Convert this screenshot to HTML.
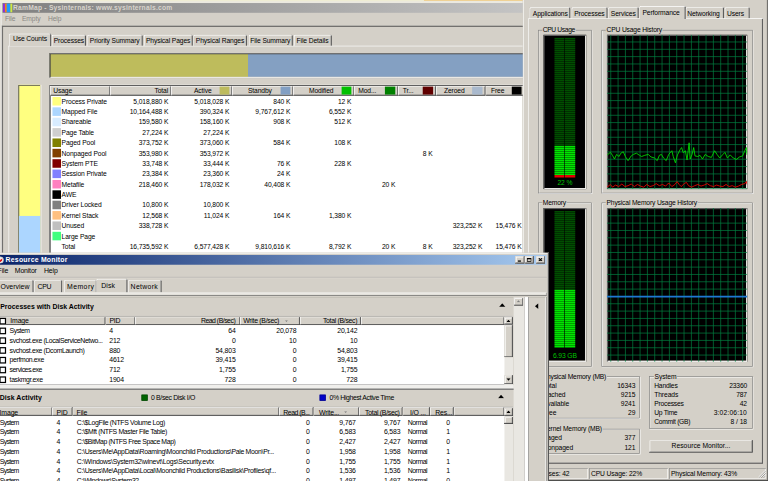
<!DOCTYPE html>
<html><head><meta charset="utf-8"><title>RamMap / Resource Monitor / Task Manager</title>
<style>
html,body{margin:0;padding:0;background:#d4d0c8;overflow:hidden}
body{width:768px;height:481px;position:relative}
#s{position:absolute;left:0;top:0;width:1259.02px;height:788.52px;transform:scale(0.61);transform-origin:0 0;overflow:hidden;
font-family:"Liberation Sans",sans-serif;font-size:11px;line-height:13.11px;letter-spacing:-0.18px;color:#000}
#s div,#s span,#s svg{position:absolute;display:block}
#s span{white-space:pre}
</style></head><body><div id="s">
<div style="left:0.00px;top:0.00px;width:857.38px;height:4.59px;background:#ebe9e0"></div>
<div style="left:0.00px;top:0.00px;width:695.08px;height:1.64px;background:#efedd4"></div>
<div style="left:695.08px;top:0.00px;width:161.64px;height:1.48px;background:#f2c263"></div>
<div style="left:0.00px;top:4.59px;width:857.38px;height:786.89px;background:#d4d0c8"></div>
<div style="left:0.00px;top:4.59px;width:2.46px;height:786.89px;background:#e3e0d9"></div>
<div style="left:1.97px;top:4.59px;width:0.82px;height:786.89px;background:#f2f1ee"></div>
<div style="left:3.61px;top:4.75px;width:852.95px;height:16.07px;background:linear-gradient(90deg,#808080,#c4c4c4)"></div>
<div style="left:4.59px;top:5.74px;width:3.93px;height:14.26px;background:#8a2be2"></div>
<div style="left:8.20px;top:5.74px;width:3.61px;height:14.26px;background:#f08020"></div>
<div style="left:11.48px;top:5.74px;width:5.25px;height:14.26px;background:#1e9cff"></div>
<div style="left:16.72px;top:5.74px;width:3.11px;height:14.26px;background:#cfe83c"></div>
<span style="left:21.31px;top:6.89px;color:#d8d4cc;font-weight:bold;letter-spacing:0.36px;">RamMap - Sysinternals: www.sysinternals.com</span>
<span style="left:8.20px;top:24.92px;color:#8a8884;">File</span>
<span style="left:36.07px;top:24.92px;color:#8a8884;">Empty</span>
<span style="left:78.69px;top:24.92px;color:#8a8884;">Help</span>
<div style="left:2.62px;top:42.13px;width:854.10px;height:1.00px;background:#808080"></div>
<div style="left:3.61px;top:43.11px;width:854.10px;height:1.00px;background:#404040"></div>
<div style="left:2.62px;top:42.13px;width:1.00px;height:754.10px;background:#808080"></div>
<div style="left:3.61px;top:43.11px;width:1.00px;height:754.10px;background:#404040"></div>
<div style="left:13.93px;top:74.75px;width:842.62px;height:1.00px;background:#ffffff"></div>
<div style="left:13.93px;top:74.75px;width:1.00px;height:721.31px;background:#ffffff"></div>
<div style="left:85.25px;top:57.38px;width:56.23px;height:17.38px;background:#d4d0c8;border-radius:2px 2px 0 0;box-shadow:inset 1px 1px 0 #ffffff,inset -1px 0 0 #404040,inset -2px 0 0 #808080"></div>
<span style="left:85.25px;width:55.25px;text-align:center;top:60.00px;">Processes</span>
<div style="left:142.62px;top:57.38px;width:91.80px;height:17.38px;background:#d4d0c8;border-radius:2px 2px 0 0;box-shadow:inset 1px 1px 0 #ffffff,inset -1px 0 0 #404040,inset -2px 0 0 #808080"></div>
<span style="left:142.62px;width:90.82px;text-align:center;top:60.00px;">Priority Summary</span>
<div style="left:235.74px;top:57.38px;width:80.66px;height:17.38px;background:#d4d0c8;border-radius:2px 2px 0 0;box-shadow:inset 1px 1px 0 #ffffff,inset -1px 0 0 #404040,inset -2px 0 0 #808080"></div>
<span style="left:235.74px;width:79.67px;text-align:center;top:60.00px;">Physical Pages</span>
<div style="left:317.38px;top:57.38px;width:87.54px;height:17.38px;background:#d4d0c8;border-radius:2px 2px 0 0;box-shadow:inset 1px 1px 0 #ffffff,inset -1px 0 0 #404040,inset -2px 0 0 #808080"></div>
<span style="left:317.38px;width:86.56px;text-align:center;top:60.00px;">Physical Ranges</span>
<div style="left:407.54px;top:57.38px;width:72.13px;height:17.38px;background:#d4d0c8;border-radius:2px 2px 0 0;box-shadow:inset 1px 1px 0 #ffffff,inset -1px 0 0 #404040,inset -2px 0 0 #808080"></div>
<span style="left:407.54px;width:71.15px;text-align:center;top:60.00px;">File Summary</span>
<div style="left:481.97px;top:57.38px;width:61.64px;height:17.38px;background:#d4d0c8;border-radius:2px 2px 0 0;box-shadow:inset 1px 1px 0 #ffffff,inset -1px 0 0 #404040,inset -2px 0 0 #808080"></div>
<span style="left:481.97px;width:60.66px;text-align:center;top:60.00px;">File Details</span>
<div style="left:15.08px;top:54.59px;width:69.18px;height:21.15px;background:#d4d0c8;border-radius:2px 2px 0 0;box-shadow:inset 1px 1px 0 #ffffff,inset -1px 0 0 #404040,inset -2px 0 0 #808080"></div>
<span style="left:15.08px;width:68.20px;text-align:center;top:58.03px;">Use Counts</span>
<div style="left:80.66px;top:86.56px;width:780.33px;height:41.31px;background:linear-gradient(90deg,#bebc5c 325.90px,#84a0c2 325.90px);box-shadow:inset 1px 1px 0 #808080,inset -1px -1px 0 #ffffff,inset 2px 2px 0 #404040,inset -2px -2px 0 #d4d0c8"></div>
<div style="left:29.84px;top:138.69px;width:36.39px;height:278.69px;background:#ffff80;box-shadow:inset 1.5px 1.5px 0 #505050"></div>
<div style="left:66.72px;top:139.34px;width:1.31px;height:278.69px;background:#f4f3f0"></div>
<div style="left:31.31px;top:354.10px;width:34.92px;height:65.57px;background:#acd6ff"></div>
<div style="left:80.66px;top:138.85px;width:777.05px;height:278.69px;background:#fff;box-shadow:inset 1px 1px 0 #808080,inset -1px -1px 0 #ffffff,inset 2px 2px 0 #404040,inset -2px -2px 0 #d4d0c8"></div>
<div style="left:82.46px;top:140.66px;width:98.52px;height:16.23px;background:#d4d0c8;box-shadow:inset -1px -1px 0 #404040,inset 1px 1px 0 #ffffff,inset -2px -2px 0 #808080"></div>
<span style="left:87.21px;top:142.54px;">Usage</span>
<div style="left:180.98px;top:140.66px;width:100.49px;height:16.23px;background:#d4d0c8;box-shadow:inset -1px -1px 0 #404040,inset 1px 1px 0 #ffffff,inset -2px -2px 0 #808080"></div>
<span style="right:983.44px;top:142.54px;">Total</span>
<div style="left:281.48px;top:140.66px;width:99.84px;height:16.23px;background:#d4d0c8;box-shadow:inset -1px -1px 0 #404040,inset 1px 1px 0 #ffffff,inset -2px -2px 0 #808080"></div>
<div style="left:359.67px;top:142.30px;width:16.72px;height:12.95px;background:#bdbb5d"></div>
<span style="left:318.03px;top:142.54px;">Active</span>
<div style="left:381.31px;top:140.66px;width:99.84px;height:16.23px;background:#d4d0c8;box-shadow:inset -1px -1px 0 #404040,inset 1px 1px 0 #ffffff,inset -2px -2px 0 #808080"></div>
<div style="left:459.51px;top:142.30px;width:16.72px;height:12.95px;background:#829fc3"></div>
<span style="left:406.56px;top:142.54px;">Standby</span>
<div style="left:481.15px;top:140.66px;width:100.00px;height:16.23px;background:#d4d0c8;box-shadow:inset -1px -1px 0 #404040,inset 1px 1px 0 #ffffff,inset -2px -2px 0 #808080"></div>
<div style="left:559.51px;top:142.30px;width:16.72px;height:12.95px;background:#00c000"></div>
<span style="left:506.56px;top:142.54px;">Modified</span>
<div style="left:581.15px;top:140.66px;width:71.80px;height:16.23px;background:#d4d0c8;box-shadow:inset -1px -1px 0 #404040,inset 1px 1px 0 #ffffff,inset -2px -2px 0 #808080"></div>
<div style="left:631.31px;top:142.30px;width:16.72px;height:12.95px;background:#008000"></div>
<span style="left:587.21px;top:142.54px;">Mod...</span>
<div style="left:652.95px;top:140.66px;width:62.13px;height:16.23px;background:#d4d0c8;box-shadow:inset -1px -1px 0 #404040,inset 1px 1px 0 #ffffff,inset -2px -2px 0 #808080"></div>
<div style="left:693.44px;top:142.30px;width:16.72px;height:12.95px;background:#600000"></div>
<span style="left:660.33px;top:142.54px;">Tr...</span>
<div style="left:715.08px;top:140.66px;width:80.49px;height:16.23px;background:#d4d0c8;box-shadow:inset -1px -1px 0 #404040,inset 1px 1px 0 #ffffff,inset -2px -2px 0 #808080"></div>
<div style="left:773.93px;top:142.30px;width:16.72px;height:12.95px;background:#a9b9cd"></div>
<span style="left:727.87px;top:142.54px;">Zeroed</span>
<div style="left:795.57px;top:140.66px;width:64.75px;height:16.23px;background:#d4d0c8;box-shadow:inset -1px -1px 0 #404040,inset 1px 1px 0 #ffffff,inset -2px -2px 0 #808080"></div>
<div style="left:838.69px;top:142.30px;width:16.72px;height:12.95px;background:#000"></div>
<span style="left:804.92px;top:142.54px;">Free</span>
<div style="left:85.74px;top:159.18px;width:13.77px;height:13.77px;background:#ffff80"></div>
<span style="left:100.98px;top:160.16px;">Process Private</span>
<span style="right:983.11px;top:160.16px;">5,018,880 K</span>
<span style="right:883.11px;top:160.16px;">5,018,028 K</span>
<span style="right:783.11px;top:160.16px;">840 K</span>
<span style="right:683.11px;top:160.16px;">12 K</span>
<div style="left:85.74px;top:176.16px;width:13.77px;height:13.77px;background:#acd6ff"></div>
<span style="left:100.98px;top:177.15px;">Mapped File</span>
<span style="right:983.11px;top:177.15px;">10,164,488 K</span>
<span style="right:883.11px;top:177.15px;">390,324 K</span>
<span style="right:783.11px;top:177.15px;">9,767,612 K</span>
<span style="right:683.11px;top:177.15px;">6,552 K</span>
<div style="left:85.74px;top:193.15px;width:13.77px;height:13.77px;background:#d8ecff"></div>
<span style="left:100.98px;top:194.13px;">Shareable</span>
<span style="right:983.11px;top:194.13px;">159,580 K</span>
<span style="right:883.11px;top:194.13px;">158,160 K</span>
<span style="right:783.11px;top:194.13px;">908 K</span>
<span style="right:683.11px;top:194.13px;">512 K</span>
<div style="left:85.74px;top:210.13px;width:13.77px;height:13.77px;background:#cfcfcf"></div>
<span style="left:100.98px;top:211.11px;">Page Table</span>
<span style="right:983.11px;top:211.11px;">27,224 K</span>
<span style="right:883.11px;top:211.11px;">27,224 K</span>
<div style="left:85.74px;top:227.11px;width:13.77px;height:13.77px;background:#808000"></div>
<span style="left:100.98px;top:228.10px;">Paged Pool</span>
<span style="right:983.11px;top:228.10px;">373,752 K</span>
<span style="right:883.11px;top:228.10px;">373,060 K</span>
<span style="right:783.11px;top:228.10px;">584 K</span>
<span style="right:683.11px;top:228.10px;">108 K</span>
<div style="left:85.74px;top:244.10px;width:13.77px;height:13.77px;background:#804000"></div>
<span style="left:100.98px;top:245.08px;">Nonpaged Pool</span>
<span style="right:983.11px;top:245.08px;">353,980 K</span>
<span style="right:883.11px;top:245.08px;">353,972 K</span>
<span style="right:549.84px;top:245.08px;">8 K</span>
<div style="left:85.74px;top:261.08px;width:13.77px;height:13.77px;background:#800000"></div>
<span style="left:100.98px;top:262.07px;">System PTE</span>
<span style="right:983.11px;top:262.07px;">33,748 K</span>
<span style="right:883.11px;top:262.07px;">33,444 K</span>
<span style="right:783.11px;top:262.07px;">76 K</span>
<span style="right:683.11px;top:262.07px;">228 K</span>
<div style="left:85.74px;top:278.07px;width:13.77px;height:13.77px;background:#8080ff"></div>
<span style="left:100.98px;top:279.05px;">Session Private</span>
<span style="right:983.11px;top:279.05px;">23,384 K</span>
<span style="right:883.11px;top:279.05px;">23,360 K</span>
<span style="right:783.11px;top:279.05px;">24 K</span>
<div style="left:85.74px;top:295.05px;width:13.77px;height:13.77px;background:#ff80c0"></div>
<span style="left:100.98px;top:296.03px;">Metafile</span>
<span style="right:983.11px;top:296.03px;">218,460 K</span>
<span style="right:883.11px;top:296.03px;">178,032 K</span>
<span style="right:783.11px;top:296.03px;">40,408 K</span>
<span style="right:610.98px;top:296.03px;">20 K</span>
<div style="left:85.74px;top:312.03px;width:13.77px;height:13.77px;background:#000000"></div>
<span style="left:100.98px;top:313.02px;">AWE</span>
<div style="left:85.74px;top:329.02px;width:13.77px;height:13.77px;background:#808080"></div>
<span style="left:100.98px;top:330.00px;">Driver Locked</span>
<span style="right:983.11px;top:330.00px;">10,800 K</span>
<span style="right:883.11px;top:330.00px;">10,800 K</span>
<div style="left:85.74px;top:346.00px;width:13.77px;height:13.77px;background:#ffc080"></div>
<span style="left:100.98px;top:346.98px;">Kernel Stack</span>
<span style="right:983.11px;top:346.98px;">12,568 K</span>
<span style="right:883.11px;top:346.98px;">11,024 K</span>
<span style="right:783.11px;top:346.98px;">164 K</span>
<span style="right:683.11px;top:346.98px;">1,380 K</span>
<div style="left:85.74px;top:362.98px;width:13.77px;height:13.77px;background:#c0c0c0"></div>
<span style="left:100.98px;top:363.97px;">Unused</span>
<span style="right:983.11px;top:363.97px;">338,728 K</span>
<span style="right:468.36px;top:363.97px;">323,252 K</span>
<span style="right:404.10px;top:363.97px;">15,476 K</span>
<div style="left:85.74px;top:379.97px;width:13.77px;height:13.77px;background:#40ff80"></div>
<span style="left:100.98px;top:380.95px;">Large Page</span>
<span style="left:100.98px;top:397.93px;">Total</span>
<span style="right:983.11px;top:397.93px;">16,735,592 K</span>
<span style="right:883.11px;top:397.93px;">6,577,428 K</span>
<span style="right:783.11px;top:397.93px;">9,810,616 K</span>
<span style="right:683.11px;top:397.93px;">8,792 K</span>
<span style="right:610.98px;top:397.93px;">20 K</span>
<span style="right:549.84px;top:397.93px;">8 K</span>
<span style="right:468.36px;top:397.93px;">323,252 K</span>
<span style="right:404.10px;top:397.93px;">15,476 K</span>
<div style="left:856.72px;top:0.00px;width:403.28px;height:790.16px;background:#d4d0c8"></div>
<div style="left:858.03px;top:0.00px;width:1.00px;height:790.16px;background:#ffffff"></div>
<div style="left:866.07px;top:29.84px;width:385.25px;height:730.16px;background:#d4d0c8;box-shadow:inset 1px 1px 0 #ffffff,inset -1px -1px 0 #404040,inset -2px -2px 0 #808080"></div>
<div style="left:868.20px;top:12.46px;width:66.89px;height:17.70px;background:#d4d0c8;border-radius:2px 2px 0 0;box-shadow:inset 1px 1px 0 #ffffff,inset -1px 0 0 #404040,inset -2px 0 0 #808080"></div>
<span style="left:873.44px;top:16.39px;">Applications</span>
<div style="left:936.56px;top:12.46px;width:59.34px;height:17.70px;background:#d4d0c8;border-radius:2px 2px 0 0;box-shadow:inset 1px 1px 0 #ffffff,inset -1px 0 0 #404040,inset -2px 0 0 #808080"></div>
<span style="left:941.31px;top:16.39px;">Processes</span>
<div style="left:996.56px;top:12.46px;width:50.82px;height:17.70px;background:#d4d0c8;border-radius:2px 2px 0 0;box-shadow:inset 1px 1px 0 #ffffff,inset -1px 0 0 #404040,inset -2px 0 0 #808080"></div>
<span style="left:1001.31px;top:16.39px;">Services</span>
<div style="left:1124.43px;top:12.46px;width:62.95px;height:17.70px;background:#d4d0c8;border-radius:2px 2px 0 0;box-shadow:inset 1px 1px 0 #ffffff,inset -1px 0 0 #404040,inset -2px 0 0 #808080"></div>
<span style="left:1126.56px;top:16.39px;">Networking</span>
<div style="left:1188.36px;top:12.46px;width:40.33px;height:17.70px;background:#d4d0c8;border-radius:2px 2px 0 0;box-shadow:inset 1px 1px 0 #ffffff,inset -1px 0 0 #404040,inset -2px 0 0 #808080"></div>
<span style="left:1191.80px;top:16.39px;">Users</span>
<div style="left:1048.20px;top:10.33px;width:76.07px;height:20.66px;background:#d4d0c8;border-radius:2px 2px 0 0;box-shadow:inset 1px 1px 0 #ffffff,inset -1px 0 0 #404040,inset -2px 0 0 #808080"></div>
<span style="left:1053.28px;top:14.10px;">Performance</span>
<div style="left:881.64px;top:48.52px;width:88.52px;height:268.85px;border:1px solid #808080;box-shadow:1px 1px 0 #ffffff,inset 1px 1px 0 #ffffff;box-sizing:border-box"></div>
<div style="left:985.90px;top:48.52px;width:247.87px;height:268.85px;border:1px solid #808080;box-shadow:1px 1px 0 #ffffff,inset 1px 1px 0 #ffffff;box-sizing:border-box"></div>
<div style="left:881.64px;top:332.46px;width:88.52px;height:268.85px;border:1px solid #808080;box-shadow:1px 1px 0 #ffffff,inset 1px 1px 0 #ffffff;box-sizing:border-box"></div>
<div style="left:985.90px;top:332.46px;width:247.87px;height:268.85px;border:1px solid #808080;box-shadow:1px 1px 0 #ffffff,inset 1px 1px 0 #ffffff;box-sizing:border-box"></div>
<span style="left:888.69px;top:41.64px;letter-spacing:-0.570px;background:#d4d0c8;padding:0 1px">CPU Usage</span>
<span style="left:993.28px;top:41.64px;letter-spacing:-0.257px;background:#d4d0c8;padding:0 1px">CPU Usage History</span>
<span style="left:888.69px;top:325.57px;letter-spacing:-0.254px;background:#d4d0c8;padding:0 1px">Memory</span>
<span style="left:993.28px;top:325.57px;letter-spacing:-0.259px;background:#d4d0c8;padding:0 1px">Physical Memory Usage History</span>
<div style="left:891.15px;top:57.21px;width:69.84px;height:252.46px;background:#000;box-shadow:inset 1px 1px 0 #808080,inset -1px -1px 0 #ffffff,inset 2px 2px 0 #404040,inset -2px -2px 0 #d4d0c8"></div>
<div style="left:909.02px;top:62.13px;width:33.61px;height:177.21px;background:repeating-linear-gradient(180deg,#004e00 0,#004e00 1.7px,#002600 2.6px,#004e00 3.279px)"></div>
<div style="left:909.02px;top:239.34px;width:33.61px;height:47.38px;background:repeating-linear-gradient(180deg,#00e400 0,#00e400 1.7px,#007400 2.6px,#00e400 3.279px)"></div>
<div style="left:909.02px;top:286.72px;width:33.61px;height:4.59px;background:#e80000"></div>
<div style="left:925.16px;top:62.13px;width:1.31px;height:229.51px;background:#000"></div>
<span style="left:891.15px;width:69.84px;text-align:center;top:293.77px;color:#00c400;">22 %</span>
<div style="left:891.15px;top:340.82px;width:69.84px;height:252.46px;background:#000;box-shadow:inset 1px 1px 0 #808080,inset -1px -1px 0 #ffffff,inset 2px 2px 0 #404040,inset -2px -2px 0 #d4d0c8"></div>
<div style="left:909.02px;top:345.74px;width:33.61px;height:129.67px;background:repeating-linear-gradient(180deg,#004e00 0,#004e00 1.7px,#002600 2.6px,#004e00 3.279px)"></div>
<div style="left:909.02px;top:475.41px;width:33.61px;height:94.92px;background:repeating-linear-gradient(180deg,#00e400 0,#00e400 1.7px,#007400 2.6px,#00e400 3.279px)"></div>
<div style="left:925.16px;top:345.74px;width:1.31px;height:229.51px;background:#000"></div>
<span style="left:891.15px;width:69.84px;text-align:center;top:577.38px;color:#00c400;">6.93 GB</span>
<div style="left:995.08px;top:57.21px;width:230.16px;height:252.46px;background:#000;box-shadow:inset 1px 1px 0 #808080,inset -1px -1px 0 #ffffff,inset 2px 2px 0 #404040,inset -2px -2px 0 #d4d0c8"></div>
<svg style="left:995.08px;top:57.21px;width:230.16px;height:252.46px" viewBox="0 0 230.16 252.46"><g stroke="#008040" stroke-width="1.15" fill="none"><path d="M6.23 0V252.46"/><path d="M18.25 0V252.46"/><path d="M30.26 0V252.46"/><path d="M42.28 0V252.46"/><path d="M54.30 0V252.46"/><path d="M66.31 0V252.46"/><path d="M78.33 0V252.46"/><path d="M90.34 0V252.46"/><path d="M102.36 0V252.46"/><path d="M114.38 0V252.46"/><path d="M126.39 0V252.46"/><path d="M138.41 0V252.46"/><path d="M150.43 0V252.46"/><path d="M162.44 0V252.46"/><path d="M174.46 0V252.46"/><path d="M186.48 0V252.46"/><path d="M198.49 0V252.46"/><path d="M210.51 0V252.46"/><path d="M222.52 0V252.46"/><path d="M0 11.80H230.16"/><path d="M0 23.82H230.16"/><path d="M0 35.84H230.16"/><path d="M0 47.85H230.16"/><path d="M0 59.87H230.16"/><path d="M0 71.89H230.16"/><path d="M0 83.90H230.16"/><path d="M0 95.92H230.16"/><path d="M0 107.93H230.16"/><path d="M0 119.95H230.16"/><path d="M0 131.97H230.16"/><path d="M0 143.98H230.16"/><path d="M0 156.00H230.16"/><path d="M0 168.02H230.16"/><path d="M0 180.03H230.16"/><path d="M0 192.05H230.16"/><path d="M0 204.07H230.16"/><path d="M0 216.08H230.16"/><path d="M0 228.10H230.16"/><path d="M0 240.11H230.16"/><path d="M0 252.13H230.16"/></g><path d="M0.1 196.9 L1.5 196.2 L5.6 192.8 L9.0 197.6 L12.4 203.7 L15.8 196.2 L19.9 199.6 L22.7 194.2 L26.8 191.8 L30.2 199.6 L34.6 206.4 L39.8 198.6 L43.2 196.2 L48.3 194.2 L53.4 197.6 L56.8 199.6 L62.0 197.6 L67.8 196.2 L72.2 200.3 L78.0 202.0 L82.4 206.4 L85.9 197.6 L89.3 196.2 L92.7 202.0 L97.1 206.4 L101.2 196.2 L106.4 190.1 L108.7 199.6 L112.2 209.9 L115.6 196.9 L120.0 188.3 L122.4 184.9 L125.1 193.5 L128.6 190.1 L131.3 205.4 L134.7 177.1 L136.4 203.7 L139.5 196.2 L142.2 184.9 L144.3 198.6 L149.0 199.6 L152.5 197.6 L156.6 203.7 L161.0 196.2 L166.1 199.6 L171.2 201.0 L176.4 190.1 L180.5 196.2 L184.9 202.0 L190.0 196.2 L193.4 192.8 L197.5 202.0 L202.0 196.9 L207.1 202.0 L212.2 204.4 L217.3 200.3 L222.5 198.6 L225.9 190.1 L228.6 184.9 L229.6 196.9" stroke="#00e000" stroke-width="1.4" fill="none" stroke-linejoin="round"/><path d="M0.1 248.1 L1.5 248.8 L5.6 245.4 L9.0 249.8 L14.1 246.4 L19.3 248.8 L24.4 244.7 L29.5 248.8 L34.6 247.4 L39.8 244.7 L44.9 248.8 L50.0 245.4 L55.1 248.1 L60.2 249.8 L65.4 245.4 L70.5 248.8 L75.6 247.4 L80.7 244.0 L85.9 247.4 L91.0 245.4 L96.1 248.1 L101.2 243.0 L106.4 248.8 L111.5 245.4 L114.9 240.6 L118.3 245.4 L121.7 248.8 L126.8 244.0 L130.3 242.0 L133.7 247.4 L138.8 249.8 L143.9 247.4 L149.0 245.4 L154.2 248.1 L159.3 246.4 L164.4 244.0 L169.5 247.4 L174.7 248.8 L179.8 246.4 L184.9 248.1 L190.0 248.8 L195.2 245.4 L200.3 248.8 L205.4 247.4 L210.5 249.8 L215.6 248.1 L220.8 245.4 L225.9 244.0 L228.6 240.6 L229.6 245.4" stroke="#f00000" stroke-width="1.4" fill="none" stroke-linejoin="round"/></svg>
<div style="left:995.08px;top:340.82px;width:230.16px;height:252.46px;background:#000;box-shadow:inset 1px 1px 0 #808080,inset -1px -1px 0 #ffffff,inset 2px 2px 0 #404040,inset -2px -2px 0 #d4d0c8"></div>
<svg style="left:995.08px;top:340.82px;width:230.16px;height:252.46px" viewBox="0 0 230.16 252.46"><g stroke="#008040" stroke-width="1.15" fill="none"><path d="M6.23 0V252.46"/><path d="M18.25 0V252.46"/><path d="M30.26 0V252.46"/><path d="M42.28 0V252.46"/><path d="M54.30 0V252.46"/><path d="M66.31 0V252.46"/><path d="M78.33 0V252.46"/><path d="M90.34 0V252.46"/><path d="M102.36 0V252.46"/><path d="M114.38 0V252.46"/><path d="M126.39 0V252.46"/><path d="M138.41 0V252.46"/><path d="M150.43 0V252.46"/><path d="M162.44 0V252.46"/><path d="M174.46 0V252.46"/><path d="M186.48 0V252.46"/><path d="M198.49 0V252.46"/><path d="M210.51 0V252.46"/><path d="M222.52 0V252.46"/><path d="M0 12.79H230.16"/><path d="M0 24.80H230.16"/><path d="M0 36.82H230.16"/><path d="M0 48.84H230.16"/><path d="M0 60.85H230.16"/><path d="M0 72.87H230.16"/><path d="M0 84.89H230.16"/><path d="M0 96.90H230.16"/><path d="M0 108.92H230.16"/><path d="M0 120.93H230.16"/><path d="M0 132.95H230.16"/><path d="M0 144.97H230.16"/><path d="M0 156.98H230.16"/><path d="M0 169.00H230.16"/><path d="M0 181.02H230.16"/><path d="M0 193.03H230.16"/><path d="M0 205.05H230.16"/><path d="M0 217.07H230.16"/><path d="M0 229.08H230.16"/><path d="M0 241.10H230.16"/></g><path d="M0 145.4H230.2" stroke="#1e78d2" stroke-width="3" fill="none"/></svg>
<div style="left:881.64px;top:616.89px;width:167.87px;height:69.51px;border:1px solid #808080;box-shadow:1px 1px 0 #ffffff,inset 1px 1px 0 #ffffff;box-sizing:border-box"></div>
<span style="left:888.69px;top:611.48px;letter-spacing:-0.334px;background:#d4d0c8;padding:0 1px">Physical Memory (MB)</span>
<span style="left:890.16px;top:626.23px;">Total</span>
<span style="right:217.54px;top:626.23px;">16343</span>
<span style="left:890.16px;top:640.82px;">Cached</span>
<span style="right:217.54px;top:640.82px;">9215</span>
<span style="left:890.16px;top:655.41px;">Available</span>
<span style="right:217.54px;top:655.41px;">9241</span>
<span style="left:890.16px;top:670.00px;">Free</span>
<span style="right:217.54px;top:670.00px;">29</span>
<div style="left:881.64px;top:702.62px;width:167.87px;height:41.64px;border:1px solid #808080;box-shadow:1px 1px 0 #ffffff,inset 1px 1px 0 #ffffff;box-sizing:border-box"></div>
<span style="left:888.69px;top:697.38px;letter-spacing:-0.245px;background:#d4d0c8;padding:0 1px">Kernel Memory (MB)</span>
<span style="left:890.16px;top:712.46px;">Paged</span>
<span style="right:217.54px;top:712.46px;">377</span>
<span style="left:890.16px;top:727.21px;">Nonpaged</span>
<span style="right:217.54px;top:727.21px;">121</span>
<div style="left:1063.93px;top:616.89px;width:169.84px;height:86.23px;border:1px solid #808080;box-shadow:1px 1px 0 #ffffff,inset 1px 1px 0 #ffffff;box-sizing:border-box"></div>
<span style="left:1071.97px;top:611.48px;letter-spacing:-0.101px;background:#d4d0c8;padding:0 1px">System</span>
<span style="left:1072.46px;top:626.23px;letter-spacing:-0.285px;">Handles</span>
<span style="right:34.43px;top:626.23px;letter-spacing:-0.281px;">23360</span>
<span style="left:1072.46px;top:640.82px;letter-spacing:-0.144px;">Threads</span>
<span style="right:34.43px;top:640.82px;">787</span>
<span style="left:1072.46px;top:655.41px;letter-spacing:-0.332px;">Processes</span>
<span style="right:34.43px;top:655.41px;">42</span>
<span style="left:1072.46px;top:670.00px;letter-spacing:-0.464px;">Up Time</span>
<span style="right:34.43px;top:670.00px;letter-spacing:0.260px;">3:02:06:10</span>
<span style="left:1072.46px;top:684.59px;letter-spacing:-0.468px;">Commit (GB)</span>
<span style="right:34.43px;top:684.59px;letter-spacing:-0.079px;">8 / 18</span>
<div style="left:1063.93px;top:720.66px;width:170.49px;height:21.31px;background:#d4d0c8;box-shadow:inset -1px -1px 0 #404040,inset 1px 1px 0 #d4d0c8,inset -2px -2px 0 #808080,inset 2px 2px 0 #ffffff"></div>
<span style="left:1063.93px;width:170.49px;text-align:center;top:725.08px;letter-spacing:0.054px;">Resource Monitor...</span>
<div style="left:859.84px;top:766.89px;width:104.10px;height:17.70px;box-shadow:inset 1px 1px 0 #808080,inset -1px -1px 0 #ffffff"></div>
<div style="left:965.90px;top:766.89px;width:129.51px;height:17.70px;box-shadow:inset 1px 1px 0 #808080,inset -1px -1px 0 #ffffff"></div>
<div style="left:1097.38px;top:766.89px;width:157.38px;height:17.70px;box-shadow:inset 1px 1px 0 #808080,inset -1px -1px 0 #ffffff"></div>
<span style="left:866.23px;top:771.48px;">Processes: 42</span>
<span style="left:968.85px;top:771.48px;">CPU Usage: 22%</span>
<span style="left:1100.00px;top:771.48px;">Physical Memory: 43%</span>
<div style="left:1256.72px;top:0.00px;width:1.00px;height:788.52px;background:#9a9894"></div>
<div style="left:1257.70px;top:0.00px;width:1.48px;height:788.52px;background:#404040"></div>
<div style="left:857.38px;top:787.05px;width:401.64px;height:1.64px;background:#404040"></div>
<div style="left:857.38px;top:786.07px;width:400.00px;height:1.00px;background:#9a9894"></div>
<svg style="left:1243.28px;top:771.48px;width:12.79px;height:12.79px" viewBox="0 0 13 13"><g stroke-width="1.5"><path d="M12 1L1 12M12 5L5 12M12 9L9 12" stroke="#707070"/><path d="M12 0L0 12M12 4L4 12M12 8L8 12" stroke="#ffffff"/></g></svg>
<div style="left:-3.28px;top:413.77px;width:903.28px;height:377.05px;background:#d4d0c8;box-shadow:inset -1px 0 0 #404040,inset -2px 0 0 #808080,inset 0 1px 0 #d4d0c8,inset 0 2px 0 #ffffff"></div>
<div style="left:0.00px;top:417.54px;width:896.39px;height:16.07px;background:linear-gradient(90deg,#0a246a,#a6caf0)"></div>
<svg style="left:-5.57px;top:419.51px;width:12.13px;height:12.46px" viewBox="0 0 74 76"><circle cx="38" cy="38" r="33" fill="#f0eeee" stroke="#c4ccc4" stroke-width="7"/><path d="M26 44L60 24L57 44L42 58L22 57Z" fill="#e01818"/></svg>
<span style="left:9.18px;top:419.34px;color:#fff;font-weight:bold;font-size:11.3px;letter-spacing:0.36px;">Resource Monitor</span>
<div style="left:844.75px;top:420.16px;width:14.75px;height:11.48px;background:#d4d0c8;box-shadow:inset -1px -1px 0 #404040,inset 1px 1px 0 #d4d0c8,inset -2px -2px 0 #808080,inset 2px 2px 0 #ffffff"></div>
<div style="left:848.85px;top:426.72px;width:5.41px;height:2.30px;background:#000"></div>
<div style="left:860.00px;top:420.16px;width:15.08px;height:11.48px;background:#d4d0c8;box-shadow:inset -1px -1px 0 #404040,inset 1px 1px 0 #d4d0c8,inset -2px -2px 0 #808080,inset 2px 2px 0 #ffffff"></div>
<div style="left:863.61px;top:422.62px;width:7.54px;height:6.56px;border:1px solid #000;border-top-width:2px;box-sizing:border-box"></div>
<div style="left:878.69px;top:420.16px;width:15.25px;height:11.48px;background:#d4d0c8;box-shadow:inset -1px -1px 0 #404040,inset 1px 1px 0 #d4d0c8,inset -2px -2px 0 #808080,inset 2px 2px 0 #ffffff"></div>
<svg style="left:881.80px;top:422.62px;width:7.87px;height:5.57px" viewBox="0 0 8 7"><path d="M0.8 0.5L7.2 6.5M7.2 0.5L0.8 6.5" stroke="#000" stroke-width="2.2"/></svg>
<span style="left:-3.93px;top:437.21px;font-size:11.3px;letter-spacing:-0.25px;">File</span>
<span style="left:24.26px;top:437.21px;font-size:11.3px;letter-spacing:-0.25px;">Monitor</span>
<span style="left:72.13px;top:437.21px;font-size:11.3px;letter-spacing:-0.25px;">Help</span>
<div style="left:0.00px;top:453.93px;width:895.74px;height:1.23px;background:#8c8c8c"></div>
<div style="left:0.00px;top:455.08px;width:895.74px;height:0.82px;background:#e6e3dc"></div>
<div style="left:-6.56px;top:459.34px;width:61.31px;height:20.33px;background:#d4d0c8;border-radius:2px 2px 0 0;box-shadow:inset 1px 1px 0 #ffffff,inset -1px 0 0 #404040,inset -2px 0 0 #808080"></div>
<div style="left:56.07px;top:459.34px;width:46.23px;height:20.33px;background:#d4d0c8;border-radius:2px 2px 0 0;box-shadow:inset 1px 1px 0 #ffffff,inset -1px 0 0 #404040,inset -2px 0 0 #808080"></div>
<div style="left:104.59px;top:459.34px;width:54.43px;height:20.33px;background:#d4d0c8;border-radius:2px 2px 0 0;box-shadow:inset 1px 1px 0 #ffffff,inset -1px 0 0 #404040,inset -2px 0 0 #808080"></div>
<div style="left:209.84px;top:459.34px;width:55.08px;height:20.33px;background:#d4d0c8;border-radius:2px 2px 0 0;box-shadow:inset 1px 1px 0 #ffffff,inset -1px 0 0 #404040,inset -2px 0 0 #808080"></div>
<span style="left:0.82px;top:463.93px;font-size:11.3px;letter-spacing:0.056px;">Overview</span>
<span style="left:61.48px;top:463.93px;font-size:11.3px;letter-spacing:-0.412px;">CPU</span>
<span style="left:109.84px;top:463.93px;font-size:11.3px;letter-spacing:0.713px;">Memory</span>
<span style="left:214.10px;top:463.93px;font-size:11.3px;letter-spacing:0.520px;">Network</span>
<div style="left:158.36px;top:457.05px;width:50.82px;height:24.59px;background:#d4d0c8;border-radius:2px 2px 0 0;box-shadow:inset 1px 1px 0 #ffffff,inset -1px 0 0 #404040,inset -2px 0 0 #808080"></div>
<span style="left:166.07px;top:461.64px;font-size:11.3px;letter-spacing:0.163px;">Disk</span>
<div style="left:0.00px;top:479.02px;width:895.74px;height:3.93px;background:#ebe9e4"></div>
<div style="left:0.00px;top:483.77px;width:895.74px;height:1.48px;background:#5c5c5c"></div>
<div style="left:0.00px;top:486.56px;width:895.74px;height:0.82px;background:#bcb8b0"></div>
<div style="left:894.75px;top:479.84px;width:1.00px;height:5.57px;background:#808080"></div>
<span style="left:0.33px;top:495.57px;font-weight:bold;font-size:11.3px;letter-spacing:0.022px;">Processes with Disk Activity</span>
<svg style="left:817.70px;top:497.05px;width:10.82px;height:6.23px" viewBox="0 0 10 6"><path d="M5 0L10 6H0Z" fill="#000"/></svg>
<div style="left:841.97px;top:486.89px;width:16.72px;height:311.48px;background:#e9e7e2"></div>
<div style="left:842.30px;top:487.54px;width:16.07px;height:13.11px;background:#d4d0c8;box-shadow:inset -1px -1px 0 #404040,inset 1px 1px 0 #d4d0c8,inset -2px -2px 0 #808080,inset 2px 2px 0 #ffffff"></div>
<svg style="left:847.21px;top:492.13px;width:5.90px;height:3.61px" viewBox="0 0 10 6"><path d="M5 0L10 6H0Z" fill="#808080"/></svg>
<div style="left:859.51px;top:486.56px;width:0.82px;height:311.48px;background:#808080"></div>
<div style="left:860.33px;top:486.56px;width:5.57px;height:311.48px;background:#fff"></div>
<div style="left:865.90px;top:486.56px;width:1.00px;height:311.48px;background:#808080"></div>
<div style="left:894.26px;top:486.56px;width:1.00px;height:311.48px;background:#ffffff"></div>
<div style="left:895.25px;top:486.56px;width:0.82px;height:311.48px;background:#808080"></div>
<svg style="left:877.05px;top:497.05px;width:5.57px;height:9.84px" viewBox="0 0 6 10"><path d="M6 0V10L0 5Z" fill="#000"/></svg>
<div style="left:0.00px;top:518.69px;width:840.98px;height:112.79px;background:#fff"></div>
<div style="left:0.00px;top:518.03px;width:840.98px;height:1.00px;background:#808080"></div>
<div style="left:-3.28px;top:519.02px;width:176.39px;height:14.10px;background:#d4d0c8;box-shadow:inset -1px -1px 0 #404040,inset 1px 1px 0 #ffffff,inset -2px -2px 0 #808080"></div>
<div style="left:173.11px;top:519.02px;width:49.18px;height:14.10px;background:#d4d0c8;box-shadow:inset -1px -1px 0 #404040,inset 1px 1px 0 #ffffff,inset -2px -2px 0 #808080"></div>
<div style="left:222.30px;top:519.02px;width:171.64px;height:14.10px;background:#d4d0c8;box-shadow:inset -1px -1px 0 #404040,inset 1px 1px 0 #ffffff,inset -2px -2px 0 #808080"></div>
<div style="left:393.93px;top:519.02px;width:98.36px;height:14.10px;background:#d4d0c8;box-shadow:inset -1px -1px 0 #404040,inset 1px 1px 0 #ffffff,inset -2px -2px 0 #808080"></div>
<div style="left:492.30px;top:519.02px;width:100.00px;height:14.10px;background:#d4d0c8;box-shadow:inset -1px -1px 0 #404040,inset 1px 1px 0 #ffffff,inset -2px -2px 0 #808080"></div>
<div style="left:592.30px;top:519.02px;width:234.59px;height:14.10px;background:#d4d0c8;box-shadow:inset -1px -1px 0 #404040,inset 1px 1px 0 #ffffff,inset -2px -2px 0 #808080"></div>
<div style="left:-1.48px;top:520.66px;width:11.31px;height:10.98px;background:#fff;border:2px solid #000;box-sizing:border-box"></div>
<span style="left:16.89px;top:520.16px;font-size:11.3px;letter-spacing:-0.25px;">Image</span>
<span style="left:179.34px;top:520.16px;font-size:11.3px;letter-spacing:-0.25px;">PID</span>
<span style="right:873.44px;top:520.16px;font-size:11.3px;letter-spacing:-0.809px;">Read (B/sec)</span>
<span style="left:398.85px;top:520.16px;font-size:11.3px;letter-spacing:-0.492px;">Write (B/sec)</span>
<span style="right:673.44px;top:520.16px;font-size:11.3px;letter-spacing:-0.505px;">Total (B/sec)</span>
<svg style="left:466.56px;top:524.92px;width:5.25px;height:2.95px" viewBox="0 0 10 6"><path d="M0 0H10L5 6Z" fill="#808080"/></svg>
<div style="left:-1.48px;top:537.21px;width:11.31px;height:10.98px;background:#fff;border:2px solid #000;box-sizing:border-box"></div>
<span style="left:15.74px;top:536.23px;font-size:11.3px;letter-spacing:-0.814px;">System</span>
<span style="left:179.02px;top:536.23px;font-size:11.3px;letter-spacing:-0.25px;">4</span>
<span style="right:872.79px;top:536.23px;font-size:11.3px;letter-spacing:-0.25px;">64</span>
<span style="right:773.11px;top:536.23px;font-size:11.3px;letter-spacing:-0.25px;">20,078</span>
<span style="right:673.11px;top:536.23px;font-size:11.3px;letter-spacing:-0.25px;">20,142</span>
<div style="left:-1.48px;top:553.25px;width:11.31px;height:10.98px;background:#fff;border:2px solid #000;box-sizing:border-box"></div>
<span style="left:15.74px;top:552.26px;font-size:11.3px;letter-spacing:-0.614px;">svchost.exe (LocalServiceNetwo...</span>
<span style="left:179.02px;top:552.26px;font-size:11.3px;letter-spacing:-0.25px;">212</span>
<span style="right:872.79px;top:552.26px;font-size:11.3px;letter-spacing:-0.25px;">0</span>
<span style="right:773.11px;top:552.26px;font-size:11.3px;letter-spacing:-0.25px;">10</span>
<span style="right:673.11px;top:552.26px;font-size:11.3px;letter-spacing:-0.25px;">10</span>
<div style="left:-1.48px;top:569.28px;width:11.31px;height:10.98px;background:#fff;border:2px solid #000;box-sizing:border-box"></div>
<span style="left:15.74px;top:568.30px;font-size:11.3px;letter-spacing:-0.595px;">svchost.exe (DcomLaunch)</span>
<span style="left:179.02px;top:568.30px;font-size:11.3px;letter-spacing:-0.25px;">880</span>
<span style="right:872.79px;top:568.30px;font-size:11.3px;letter-spacing:-0.25px;">54,803</span>
<span style="right:773.11px;top:568.30px;font-size:11.3px;letter-spacing:-0.25px;">0</span>
<span style="right:673.11px;top:568.30px;font-size:11.3px;letter-spacing:-0.25px;">54,803</span>
<div style="left:-1.48px;top:585.31px;width:11.31px;height:10.98px;background:#fff;border:2px solid #000;box-sizing:border-box"></div>
<span style="left:15.74px;top:584.33px;font-size:11.3px;letter-spacing:-0.598px;">perfmon.exe</span>
<span style="left:179.02px;top:584.33px;font-size:11.3px;letter-spacing:-0.25px;">4612</span>
<span style="right:872.79px;top:584.33px;font-size:11.3px;letter-spacing:-0.25px;">39,415</span>
<span style="right:773.11px;top:584.33px;font-size:11.3px;letter-spacing:-0.25px;">0</span>
<span style="right:673.11px;top:584.33px;font-size:11.3px;letter-spacing:-0.25px;">39,415</span>
<div style="left:-1.48px;top:601.34px;width:11.31px;height:10.98px;background:#fff;border:2px solid #000;box-sizing:border-box"></div>
<span style="left:15.74px;top:600.36px;font-size:11.3px;letter-spacing:-0.821px;">services.exe</span>
<span style="left:179.02px;top:600.36px;font-size:11.3px;letter-spacing:-0.25px;">712</span>
<span style="right:872.79px;top:600.36px;font-size:11.3px;letter-spacing:-0.25px;">1,755</span>
<span style="right:773.11px;top:600.36px;font-size:11.3px;letter-spacing:-0.25px;">0</span>
<span style="right:673.11px;top:600.36px;font-size:11.3px;letter-spacing:-0.25px;">1,755</span>
<div style="left:-1.48px;top:617.38px;width:11.31px;height:10.98px;background:#fff;border:2px solid #000;box-sizing:border-box"></div>
<span style="left:15.74px;top:616.39px;font-size:11.3px;letter-spacing:-0.620px;">taskmgr.exe</span>
<span style="left:179.02px;top:616.39px;font-size:11.3px;letter-spacing:-0.25px;">1904</span>
<span style="right:872.79px;top:616.39px;font-size:11.3px;letter-spacing:-0.25px;">728</span>
<span style="right:773.11px;top:616.39px;font-size:11.3px;letter-spacing:-0.25px;">0</span>
<span style="right:673.11px;top:616.39px;font-size:11.3px;letter-spacing:-0.25px;">728</span>
<div style="left:826.89px;top:519.02px;width:14.10px;height:112.13px;background:#e9e7e2"></div>
<div style="left:826.89px;top:520.00px;width:14.10px;height:12.46px;background:#d4d0c8;box-shadow:inset -1px -1px 0 #404040,inset 1px 1px 0 #d4d0c8,inset -2px -2px 0 #808080,inset 2px 2px 0 #ffffff"></div>
<div style="left:826.89px;top:532.79px;width:14.10px;height:53.44px;background:#d4d0c8;box-shadow:inset -1px -1px 0 #404040,inset 1px 1px 0 #d4d0c8,inset -2px -2px 0 #808080,inset 2px 2px 0 #ffffff"></div>
<div style="left:826.89px;top:615.08px;width:14.10px;height:15.08px;background:#d4d0c8;box-shadow:inset -1px -1px 0 #404040,inset 1px 1px 0 #d4d0c8,inset -2px -2px 0 #808080,inset 2px 2px 0 #ffffff"></div>
<svg style="left:830.16px;top:523.93px;width:7.21px;height:4.26px" viewBox="0 0 10 6"><path d="M5 0L10 6H0Z" fill="#000"/></svg>
<svg style="left:830.00px;top:620.49px;width:7.21px;height:4.26px" viewBox="0 0 10 6"><path d="M0 0H10L5 6Z" fill="#000"/></svg>
<div style="left:0.00px;top:630.66px;width:841.64px;height:7.21px;background:#f0efec"></div>
<div style="left:0.00px;top:630.49px;width:826.89px;height:0.82px;background:#a4a4a4"></div>
<div style="left:0.00px;top:637.38px;width:841.64px;height:1.48px;background:#6c6c6c"></div>
<span style="left:-0.33px;top:646.07px;font-weight:bold;font-size:11.3px;letter-spacing:0.111px;">Disk Activity</span>
<div style="left:231.80px;top:646.89px;width:9.84px;height:9.84px;background:#006400;border:1px solid #004000;box-sizing:border-box"></div>
<span style="left:247.54px;top:646.23px;font-size:11.3px;letter-spacing:-0.555px;">0 B/sec Disk I/O</span>
<div style="left:523.93px;top:647.21px;width:10.16px;height:10.16px;background:#0000c8;border:1px solid #000080;box-sizing:border-box"></div>
<span style="left:540.16px;top:646.23px;font-size:11.3px;letter-spacing:-0.589px;">0% Highest Active Time</span>
<svg style="left:816.39px;top:647.05px;width:10.82px;height:6.23px" viewBox="0 0 10 6"><path d="M5 0L10 6H0Z" fill="#000"/></svg>
<div style="left:0.00px;top:667.87px;width:840.98px;height:124.59px;background:#fff"></div>
<div style="left:0.00px;top:667.05px;width:840.98px;height:1.00px;background:#808080"></div>
<div style="left:-3.28px;top:668.03px;width:89.51px;height:14.26px;background:#d4d0c8;box-shadow:inset -1px -1px 0 #404040,inset 1px 1px 0 #ffffff,inset -2px -2px 0 #808080"></div>
<div style="left:86.23px;top:668.03px;width:32.79px;height:14.26px;background:#d4d0c8;box-shadow:inset -1px -1px 0 #404040,inset 1px 1px 0 #ffffff,inset -2px -2px 0 #808080"></div>
<div style="left:119.02px;top:668.03px;width:339.34px;height:14.26px;background:#d4d0c8;box-shadow:inset -1px -1px 0 #404040,inset 1px 1px 0 #ffffff,inset -2px -2px 0 #808080"></div>
<div style="left:458.36px;top:668.03px;width:55.41px;height:14.26px;background:#d4d0c8;box-shadow:inset -1px -1px 0 #404040,inset 1px 1px 0 #ffffff,inset -2px -2px 0 #808080"></div>
<div style="left:513.77px;top:668.03px;width:74.75px;height:14.26px;background:#d4d0c8;box-shadow:inset -1px -1px 0 #404040,inset 1px 1px 0 #ffffff,inset -2px -2px 0 #808080"></div>
<div style="left:588.52px;top:668.03px;width:71.80px;height:14.26px;background:#d4d0c8;box-shadow:inset -1px -1px 0 #404040,inset 1px 1px 0 #ffffff,inset -2px -2px 0 #808080"></div>
<div style="left:660.33px;top:668.03px;width:45.08px;height:14.26px;background:#d4d0c8;box-shadow:inset -1px -1px 0 #404040,inset 1px 1px 0 #ffffff,inset -2px -2px 0 #808080"></div>
<div style="left:705.41px;top:668.03px;width:38.20px;height:14.26px;background:#d4d0c8;box-shadow:inset -1px -1px 0 #404040,inset 1px 1px 0 #ffffff,inset -2px -2px 0 #808080"></div>
<div style="left:743.61px;top:668.03px;width:83.28px;height:14.26px;background:#d4d0c8;box-shadow:inset -1px -1px 0 #404040,inset 1px 1px 0 #ffffff,inset -2px -2px 0 #808080"></div>
<span style="left:-0.66px;top:669.84px;font-size:11.3px;letter-spacing:-0.25px;">Image</span>
<span style="left:92.79px;top:669.84px;font-size:11.3px;letter-spacing:-0.25px;">PID</span>
<span style="left:125.57px;top:669.84px;font-size:11.3px;letter-spacing:-0.25px;">File</span>
<span style="left:464.43px;top:669.84px;font-size:11.3px;letter-spacing:-0.792px;">Read (B...</span>
<span style="left:522.95px;top:669.84px;font-size:11.3px;letter-spacing:-0.349px;">Write...</span>
<span style="right:603.93px;top:669.84px;font-size:11.3px;letter-spacing:-0.480px;">Total (B/sec)</span>
<span style="left:672.13px;top:669.84px;font-size:11.3px;letter-spacing:-0.25px;">I/O ...</span>
<span style="left:713.44px;top:669.84px;font-size:11.3px;letter-spacing:-0.25px;">Res...</span>
<svg style="left:564.26px;top:674.26px;width:5.25px;height:2.95px" viewBox="0 0 10 6"><path d="M0 0H10L5 6Z" fill="#808080"/></svg>
<span style="left:-0.49px;top:685.57px;font-size:11.3px;letter-spacing:-1.088px;">System</span>
<span style="left:92.79px;top:685.57px;font-size:11.3px;letter-spacing:-0.25px;">4</span>
<span style="left:125.90px;top:685.57px;font-size:11.3px;letter-spacing:-0.558px;">C:\$LogFile (NTFS Volume Log)</span>
<span style="right:751.48px;top:685.57px;font-size:11.3px;letter-spacing:-0.25px;">0</span>
<span style="right:675.74px;top:685.57px;font-size:11.3px;letter-spacing:-0.25px;">9,767</span>
<span style="right:602.62px;top:685.57px;font-size:11.3px;letter-spacing:-0.25px;">9,767</span>
<span style="left:668.52px;top:685.57px;font-size:11.3px;letter-spacing:-0.823px;">Normal</span>
<span style="right:521.31px;top:685.57px;font-size:11.3px;letter-spacing:-0.25px;">0</span>
<span style="left:-0.49px;top:701.61px;font-size:11.3px;letter-spacing:-1.088px;">System</span>
<span style="left:92.79px;top:701.61px;font-size:11.3px;letter-spacing:-0.25px;">4</span>
<span style="left:125.90px;top:701.61px;font-size:11.3px;letter-spacing:-0.552px;">C:\$Mft (NTFS Master File Table)</span>
<span style="right:751.48px;top:701.61px;font-size:11.3px;letter-spacing:-0.25px;">0</span>
<span style="right:675.74px;top:701.61px;font-size:11.3px;letter-spacing:-0.25px;">6,583</span>
<span style="right:602.62px;top:701.61px;font-size:11.3px;letter-spacing:-0.25px;">6,583</span>
<span style="left:668.52px;top:701.61px;font-size:11.3px;letter-spacing:-0.823px;">Normal</span>
<span style="right:521.31px;top:701.61px;font-size:11.3px;letter-spacing:-0.25px;">1</span>
<span style="left:-0.49px;top:717.64px;font-size:11.3px;letter-spacing:-1.088px;">System</span>
<span style="left:92.79px;top:717.64px;font-size:11.3px;letter-spacing:-0.25px;">4</span>
<span style="left:125.90px;top:717.64px;font-size:11.3px;letter-spacing:-0.654px;">C:\$BitMap (NTFS Free Space Map)</span>
<span style="right:751.48px;top:717.64px;font-size:11.3px;letter-spacing:-0.25px;">0</span>
<span style="right:675.74px;top:717.64px;font-size:11.3px;letter-spacing:-0.25px;">2,427</span>
<span style="right:602.62px;top:717.64px;font-size:11.3px;letter-spacing:-0.25px;">2,427</span>
<span style="left:668.52px;top:717.64px;font-size:11.3px;letter-spacing:-0.823px;">Normal</span>
<span style="right:521.31px;top:717.64px;font-size:11.3px;letter-spacing:-0.25px;">0</span>
<span style="left:-0.49px;top:733.67px;font-size:11.3px;letter-spacing:-1.088px;">System</span>
<span style="left:92.79px;top:733.67px;font-size:11.3px;letter-spacing:-0.25px;">4</span>
<span style="left:125.90px;top:733.67px;font-size:11.3px;letter-spacing:-0.505px;">C:\Users\Me\AppData\Roaming\Moonchild Productions\Pale Moon\Pr...</span>
<span style="right:751.48px;top:733.67px;font-size:11.3px;letter-spacing:-0.25px;">0</span>
<span style="right:675.74px;top:733.67px;font-size:11.3px;letter-spacing:-0.25px;">1,958</span>
<span style="right:602.62px;top:733.67px;font-size:11.3px;letter-spacing:-0.25px;">1,958</span>
<span style="left:668.52px;top:733.67px;font-size:11.3px;letter-spacing:-0.823px;">Normal</span>
<span style="right:521.31px;top:733.67px;font-size:11.3px;letter-spacing:-0.25px;">1</span>
<span style="left:-0.49px;top:749.70px;font-size:11.3px;letter-spacing:-1.088px;">System</span>
<span style="left:92.79px;top:749.70px;font-size:11.3px;letter-spacing:-0.25px;">4</span>
<span style="left:125.90px;top:749.70px;font-size:11.3px;letter-spacing:-0.412px;">C:\Windows\System32\winevt\Logs\Security.evtx</span>
<span style="right:751.48px;top:749.70px;font-size:11.3px;letter-spacing:-0.25px;">0</span>
<span style="right:675.74px;top:749.70px;font-size:11.3px;letter-spacing:-0.25px;">1,755</span>
<span style="right:602.62px;top:749.70px;font-size:11.3px;letter-spacing:-0.25px;">1,755</span>
<span style="left:668.52px;top:749.70px;font-size:11.3px;letter-spacing:-0.823px;">Normal</span>
<span style="right:521.31px;top:749.70px;font-size:11.3px;letter-spacing:-0.25px;">1</span>
<span style="left:-0.49px;top:765.74px;font-size:11.3px;letter-spacing:-1.088px;">System</span>
<span style="left:92.79px;top:765.74px;font-size:11.3px;letter-spacing:-0.25px;">4</span>
<span style="left:125.90px;top:765.74px;font-size:11.3px;letter-spacing:-0.500px;">C:\Users\Me\AppData\Local\Moonchild Productions\Basilisk\Profiles\qf...</span>
<span style="right:751.48px;top:765.74px;font-size:11.3px;letter-spacing:-0.25px;">0</span>
<span style="right:675.74px;top:765.74px;font-size:11.3px;letter-spacing:-0.25px;">1,536</span>
<span style="right:602.62px;top:765.74px;font-size:11.3px;letter-spacing:-0.25px;">1,536</span>
<span style="left:668.52px;top:765.74px;font-size:11.3px;letter-spacing:-0.823px;">Normal</span>
<span style="right:521.31px;top:765.74px;font-size:11.3px;letter-spacing:-0.25px;">1</span>
<span style="left:-0.49px;top:781.77px;font-size:11.3px;letter-spacing:-1.088px;">System</span>
<span style="left:92.79px;top:781.77px;font-size:11.3px;letter-spacing:-0.25px;">4</span>
<span style="left:125.90px;top:781.77px;font-size:11.3px;letter-spacing:-0.633px;">C:\Windows\System32</span>
<span style="right:751.48px;top:781.77px;font-size:11.3px;letter-spacing:-0.25px;">0</span>
<span style="right:675.74px;top:781.77px;font-size:11.3px;letter-spacing:-0.25px;">1,497</span>
<span style="right:602.62px;top:781.77px;font-size:11.3px;letter-spacing:-0.25px;">1,497</span>
<span style="left:668.52px;top:781.77px;font-size:11.3px;letter-spacing:-0.823px;">Normal</span>
<span style="right:521.31px;top:781.77px;font-size:11.3px;letter-spacing:-0.25px;">0</span>
<div style="left:826.89px;top:668.03px;width:14.10px;height:124.59px;background:#e9e7e2"></div>
<div style="left:826.89px;top:668.85px;width:14.10px;height:13.44px;background:#d4d0c8;box-shadow:inset -1px -1px 0 #404040,inset 1px 1px 0 #d4d0c8,inset -2px -2px 0 #808080,inset 2px 2px 0 #ffffff"></div>
<div style="left:826.89px;top:682.62px;width:14.10px;height:12.79px;background:#d4d0c8;box-shadow:inset -1px -1px 0 #404040,inset 1px 1px 0 #d4d0c8,inset -2px -2px 0 #808080,inset 2px 2px 0 #ffffff"></div>
<svg style="left:830.16px;top:673.11px;width:7.21px;height:4.26px" viewBox="0 0 10 6"><path d="M5 0L10 6H0Z" fill="#000"/></svg>
</div></body></html>
